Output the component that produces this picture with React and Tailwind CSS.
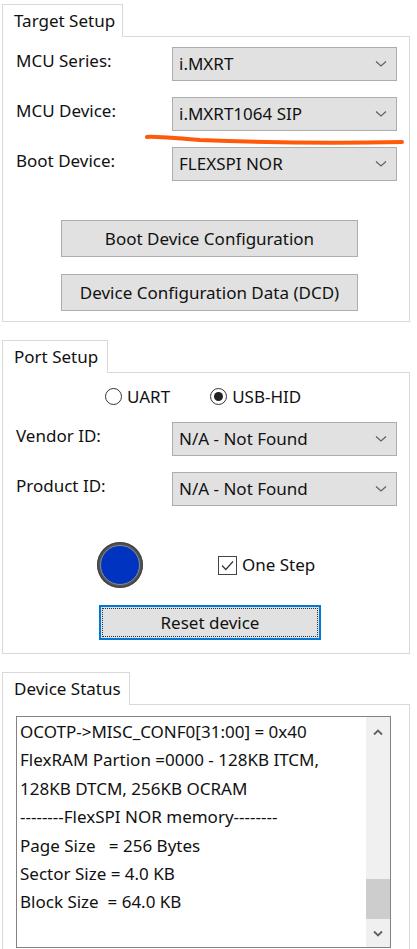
import React from "react";

const font = { fontFamily: '"Noto Sans", "Open Sans", sans-serif' };

const Chevron = () => (
  <svg width="12" height="8" viewBox="0 0 12 8" className="shrink-0">
    <path d="M1 1.5 L6 6 L11 1.5" fill="none" stroke="#606060" strokeWidth="1.2" />
  </svg>
);

const Select = ({ value }) => (
  <div className="flex h-[34px] w-[225px] items-center justify-between border border-[#adadad] bg-[#e1e1e1] pl-[6px] pr-[9px] text-[17px] text-[#111]">
    <span>{value}</span>
    <Chevron />
  </div>
);

const Field = ({ label, value }) => (
  <div className="flex items-start">
    <div className="w-[169px] pl-[13px] pt-[1px] text-[17px] text-[#111]">{label}</div>
    <Select value={value} />
  </div>
);

const Button = ({ children, focused }) => (
  <div
    className={
      focused
        ? "flex h-[35px] w-[222px] items-center justify-center border-2 border-[#0078d7] bg-[#e1e1e1] p-[1px]"
        : "flex h-[37px] w-[297px] items-center justify-center border border-[#adadad] bg-[#e1e1e1]"
    }
  >
    {focused ? (
      <div className="flex h-full w-full items-center justify-center border border-dotted border-[#333] text-[17px] text-[#111]">
        {children}
      </div>
    ) : (
      <span className="text-[17px] text-[#111]">{children}</span>
    )}
  </div>
);

const Group = ({ title, tabWidth, children, className }) => (
  <div className={"flex w-[408px] flex-col " + (className || "")}>
    <div
      className="relative z-10 -mb-px flex h-[33px] items-center border border-b-0 border-[#d9d9d9] bg-white pl-[11px] text-[17px] text-[#111]"
      style={{ width: tabWidth }}
    >
      {title}
    </div>
    <div className="border border-[#d9d9d9]">{children}</div>
  </div>
);

const Radio = ({ checked, label }) => (
  <div className="flex items-center gap-[5px] text-[17px] text-[#111]">
    <div className="flex h-[17px] w-[17px] items-center justify-center rounded-full border border-[#333] bg-white">
      {checked && <div className="h-[9px] w-[9px] rounded-full bg-[#222]" />}
    </div>
    <span>{label}</span>
  </div>
);

const statusLines = [
  "OCOTP->MISC_CONF0[31:00] = 0x40",
  "FlexRAM Partion =0000 - 128KB ITCM,",
  "128KB DTCM, 256KB OCRAM",
  "--------FlexSPI NOR memory--------",
  "Page Size   = 256 Bytes",
  "Sector Size = 4.0 KB",
  "Block Size  = 64.0 KB",
];

export default function App() {
  return (
    <div className="relative h-[949px] w-[417px] overflow-hidden bg-white pl-[2px] pt-[4px]" style={font}>
      {/* Target Setup */}
      <Group title="Target Setup" tabWidth={121}>
        <div className="flex h-[284px] flex-col pt-[10px]">
          <div className="flex flex-col gap-[16px]">
            <Field label="MCU Series:" value="i.MXRT" />
            <Field label="MCU Device:" value="i.MXRT1064 SIP" />
            <Field label="Boot Device:" value="FLEXSPI NOR" />
          </div>
          <div className="mt-[39px] flex flex-col gap-[17px] pl-[58px]">
            <Button>Boot Device Configuration</Button>
            <Button>Device Configuration Data (DCD)</Button>
          </div>
        </div>
      </Group>

      {/* Port Setup */}
      <Group title="Port Setup" tabWidth={106} className="mt-[18px]">
        <div className="flex h-[280px] flex-col">
          <div className="mt-[15px] flex h-[17px] items-center gap-[40px] pl-[102px]">
            <Radio label="UART" />
            <Radio checked label="USB-HID" />
          </div>
          <div className="mt-[17px] flex flex-col gap-[16px]">
            <Field label="Vendor ID:" value="N/A - Not Found" />
            <Field label="Product ID:" value="N/A - Not Found" />
          </div>
          <div className="mt-[36px] flex items-center">
            <div className="ml-[94px] flex h-[46px] w-[46px] items-center justify-center rounded-full bg-[#555] p-[3px] shadow-[inset_0_0_2px_#000]">
              <div className="h-full w-full rounded-full border border-[#8a8a8a] bg-[#0033c0]" />
            </div>
            <div className="ml-[75px] flex items-center gap-[5px] text-[17px] text-[#111]">
              <div className="flex h-[19px] w-[19px] items-center justify-center border border-[#444] bg-white">
                <svg width="13" height="11" viewBox="0 0 13 11">
                  <path d="M1 5.5 L4.8 9.5 L12 1.5" fill="none" stroke="#333" strokeWidth="1.2" />
                </svg>
              </div>
              <span>One Step</span>
            </div>
          </div>
          <div className="mt-[17px] pl-[96px]">
            <Button focused>Reset device</Button>
          </div>
        </div>
      </Group>

      {/* Device Status */}
      <Group title="Device Status" tabWidth={128} className="mt-[18px]">
        <div className="h-[260px] pl-[13px] pt-[11px]">
          <div className="flex h-[232px] w-[375px] border border-[#828282] bg-white">
            <div className="flex-1 pl-[3px] pt-[1px] text-[17px] leading-[28.4px] text-[#111]">
              {statusLines.map((line) => (
                <div key={line} className="whitespace-pre">{line}</div>
              ))}
            </div>
            <div className="flex w-[24px] flex-col items-center bg-[#f0f0f0]">
              <div className="flex h-[30px] items-center">
                <svg width="10" height="7" viewBox="0 0 10 7">
                  <path d="M1 5.5 L5 1.5 L9 5.5" fill="none" stroke="#606060" strokeWidth="1.8" />
                </svg>
              </div>
              <div className="mt-[132px] h-[40px] w-full bg-[#cdcdcd]" />
              <div className="flex h-[28px] items-center">
                <svg width="10" height="7" viewBox="0 0 10 7">
                  <path d="M1 1.5 L5 5.5 L9 1.5" fill="none" stroke="#606060" strokeWidth="1.8" />
                </svg>
              </div>
            </div>
          </div>
        </div>
      </Group>

      {/* hand-drawn highlight under the device selector */}
      <svg className="absolute left-0 top-0" width="417" height="160" viewBox="0 0 417 160">
        <path
          d="M147 137 Q150 136 200 140 Q300 144 402 142"
          fill="none"
          stroke="#ff5a0a"
          strokeWidth="4"
          strokeLinecap="round"
        />
      </svg>
    </div>
  );
}
